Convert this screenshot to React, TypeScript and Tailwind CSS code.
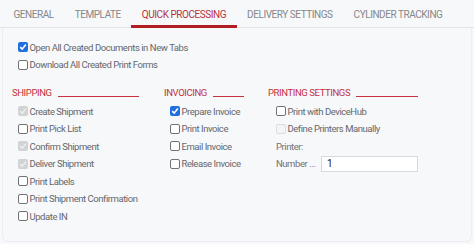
import React from "react";

type CbState = "on" | "off" | "disOn" | "disOff";

function Box({ s }: { s: CbState }) {
  if (s === "on")
    return (
      <span className="w-[10px] h-[10px] rounded-[2px] bg-[#1f6fe0] flex items-center justify-center shrink-0">
        <svg width="8" height="8" viewBox="0 0 8 8"><path d="M1.2 4.2 L3.2 6.1 L6.9 1.6" stroke="#fff" strokeWidth="1.6" fill="none" /></svg>
      </span>
    );
  if (s === "disOn")
    return (
      <span className="w-[10px] h-[10px] rounded-[2px] bg-[#d2d3d5] flex items-center justify-center shrink-0">
        <svg width="8" height="8" viewBox="0 0 8 8"><path d="M1.2 4.2 L3.2 6.1 L6.9 1.6" stroke="#eeeeee" strokeWidth="1.4" fill="none" /></svg>
      </span>
    );
  if (s === "disOff")
    return <span className="w-[10px] h-[10px] rounded-[2px] border border-[#dcdde0] bg-[#f3f4f6] shrink-0" />;
  return <span className="w-[10px] h-[10px] rounded-[2px] border border-[#707276] bg-white shrink-0" />;
}

function Cb({ s, label }: { s: CbState; label: string }) {
  return (
    <div className="h-[17.5px] flex items-center gap-[1.5px]">
      <Box s={s} />
      <span className="text-[9.5px] tracking-[-0.45px] text-[#65676b] leading-none">{label}</span>
    </div>
  );
}

function Header({ title }: { title: string }) {
  return (
    <div className="flex items-end h-[17px] mb-[5px]">
      <span className="text-[9.5px] tracking-[-0.4px] text-[#c3313d] leading-none">{title}</span>
      <span className="flex-1 ml-[6px] h-px bg-[#c8323e] mb-[1px]" />
    </div>
  );
}

export default function App() {
  const tabs = ["GENERAL", "TEMPLATE", "QUICK PROCESSING", "DELIVERY SETTINGS", "CYLINDER TRACKING"];
  return (
    <div className="w-[474px] h-[244px] bg-[#f7f8fa] flex flex-col overflow-hidden" style={{ fontFamily: "Roboto, 'Liberation Sans', sans-serif" }}>
      <div className="h-[28px] flex pl-[3px] border-b border-[#e2e4e8] shrink-0">
        {tabs.map((t, i) => (
          <div key={t} className="relative px-[10.5px] pt-[3px] flex items-center">
            <span className={`text-[10px] tracking-[-0.45px] leading-none ${i === 2 ? "text-[#b8323c]" : "text-[#85878b]"}`}>{t}</span>
            {i === 2 && <span className="absolute left-0 right-0 bottom-[-1px] h-[3px] bg-[#b11f24]" />}
          </div>
        ))}
      </div>
      <div className="flex-1 px-[2px] pb-[2px] flex">
        <div className="flex-1 border border-t-0 border-[#eceef1] rounded-b-[6px] pt-[10.5px] pl-[15px]">
          <Cb s="on" label="Open All Created Documents in New Tabs" />
          <Cb s="off" label="Download All Created Print Forms" />
          <div className="flex mt-[7px] -ml-[6px]">
            <div className="w-[127px] mr-[25px]">
              <Header title="SHIPPING" />
              <div className="pl-[6px]">
                <Cb s="disOn" label="Create Shipment" />
                <Cb s="off" label="Print Pick List" />
                <Cb s="disOn" label="Confirm Shipment" />
                <Cb s="disOn" label="Deliver Shipment" />
                <Cb s="off" label="Print Labels" />
                <Cb s="off" label="Print Shipment Confirmation" />
                <Cb s="off" label="Update IN" />
              </div>
            </div>
            <div className="w-[80px] mr-[24px]">
              <Header title="INVOICING" />
              <div className="pl-[6px]">
                <Cb s="on" label="Prepare Invoice" />
                <Cb s="off" label="Print Invoice" />
                <Cb s="off" label="Email Invoice" />
                <Cb s="off" label="Release Invoice" />
              </div>
            </div>
            <div className="w-[150px]">
              <Header title="PRINTING SETTINGS" />
              <div className="pl-[8px]">
                <Cb s="off" label="Print with DeviceHub" />
                <Cb s="disOff" label="Define Printers Manually" />
                <div className="h-[17.5px] flex items-center">
                  <span className="text-[9.5px] tracking-[-0.45px] text-[#707276] leading-none">Printer:</span>
                </div>
                <div className="h-[17.5px] flex items-center">
                  <span className="w-[45px] text-[9.5px] tracking-[-0.45px] text-[#707276] leading-none">Number ...</span>
                  <div className="w-[97px] h-[16px] bg-white border border-[#d5d8dc] flex items-center pl-[5px]">
                    <span className="text-[10px] text-[#222] leading-none">1</span>
                  </div>
                </div>
              </div>
            </div>
          </div>
        </div>
      </div>
    </div>
  );
}
